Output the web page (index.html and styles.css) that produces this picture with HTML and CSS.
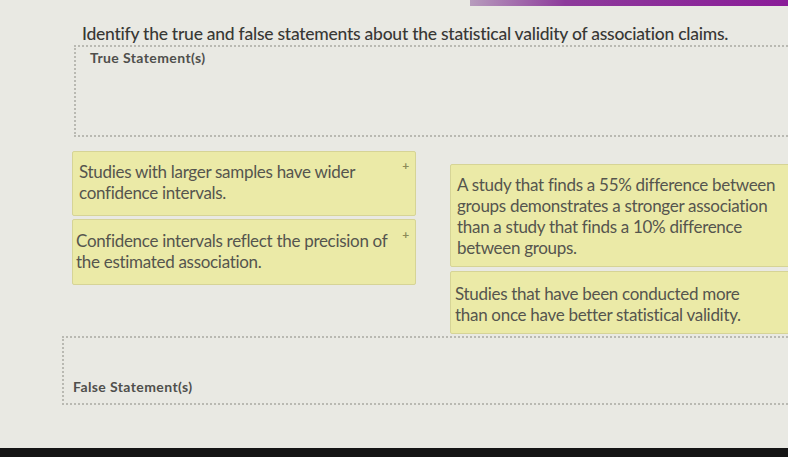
FILE: index.html
```html
<!DOCTYPE html>
<html>
<head>
<meta charset="utf-8">
<link rel="stylesheet" href="styles.css">
</head>
<body>
<div class="screen">
  <div class="topbar"></div>
  <div class="content">
    <h1 class="title">Identify the true and false statements about the statistical validity of association claims.</h1>
    <div class="zone zone-true">
      <div class="zone-label">True Statement(s)</div>
    </div>
    <div class="cards">
      <div class="col col-left">
        <div class="card card-a"><span class="txt">Studies with larger samples have wider confidence intervals.</span><span class="plus">+</span></div>
        <div class="card card-b"><span class="txt">Confidence intervals reflect the precision of the estimated association.</span><span class="plus">+</span></div>
      </div>
      <div class="col col-right">
        <div class="card card-c"><span class="txt">A study that finds a 55% difference between groups demonstrates a stronger association than a study that finds a 10% difference between groups.</span></div>
        <div class="card card-d"><span class="txt">Studies that have been conducted more than once have better statistical validity.</span></div>
      </div>
    </div>
    <div class="zone zone-false">
      <div class="zone-label">False Statement(s)</div>
    </div>
  </div>
  <div class="bottombar"></div>
</div>
</body>
</html>
```
FILE: styles.css
```css
html, body {
  margin: 0;
  padding: 0;
}
body {
  background: #e9e9e3;
  font-family: "Lato", "Open Sans", sans-serif;
  color: #4a4a46;
  overflow: hidden;
}
.screen {
  width: 788px;
  height: 457px;
  display: flex;
  flex-direction: column;
  position: relative;
  overflow: hidden;
}
.topbar {
  height: 6px;
  margin-left: 470px;
  background: linear-gradient(90deg, #b79cbd 0%, #8d3a9b 30%, #8a1c98 100%);
  flex: none;
}
.content {
  flex: 1;
  padding-left: 62px;
}
.title {
  margin: 17px 0 0 20px;
  font-size: 17.5px;
  font-weight: 500;
  letter-spacing: -0.25px;
  color: #383835;
  line-height: 22px;
  white-space: nowrap;
}
.zone {
  border: 2px dotted #b9b9b2;
  border-right: none;
  box-sizing: border-box;
  position: relative;
}
.zone-true {
  margin-left: 12px;
  margin-top: 0;
  height: 92px;
  padding: 2px 0 0 14px;
}
.zone-label {
  font-size: 14px;
  font-weight: 700;
  color: #4f4f4c;
  letter-spacing: 0.4px;
}
.cards {
  display: grid;
  grid-template-columns: 344px 340px;
  column-gap: 34px;
  margin-top: 14px;
  margin-left: 10px;
}
.col {
  display: flex;
  flex-direction: column;
  gap: 3px;
}
.col-right {
  padding-top: 13px;
  gap: 4px;
}
.card {
  background: #ebeaa7;
  border: 1px solid #d6d496;
  border-radius: 2px;
  box-sizing: border-box;
  display: flex;
  align-items: flex-start;
  padding: 9px 6px 0 6px;
  font-size: 17px;
  line-height: 21px;
  letter-spacing: -0.3px;
  color: #55554e;
}
.txt {
  flex: 1;
}
.col-left .txt {
  max-width: 320px;
}
.col-right .txt {
  flex: none;
  max-width: 322px;
}
.card-d .txt {
  max-width: 300px;
}
.plus {
  margin-left: auto;
  font-size: 12px;
  font-weight: 700;
  color: #8c8a58;
  line-height: 12px;
  margin-top: -1px;
}
.card-a { height: 65px; }
.card-b { height: 66px; padding-top: 10px; padding-left: 3px; }
.card-c { height: 103px; padding-top: 9px; padding-left: 6px; }
.card-d { height: 63px; padding-top: 11px; padding-left: 4px; }
.zone-false {
  margin-top: 2px;
  height: 69px;
  display: flex;
  align-items: flex-end;
  padding: 0 0 8px 9px;
}
.bottombar {
  height: 9px;
  background: #151515;
  flex: none;
}
```
